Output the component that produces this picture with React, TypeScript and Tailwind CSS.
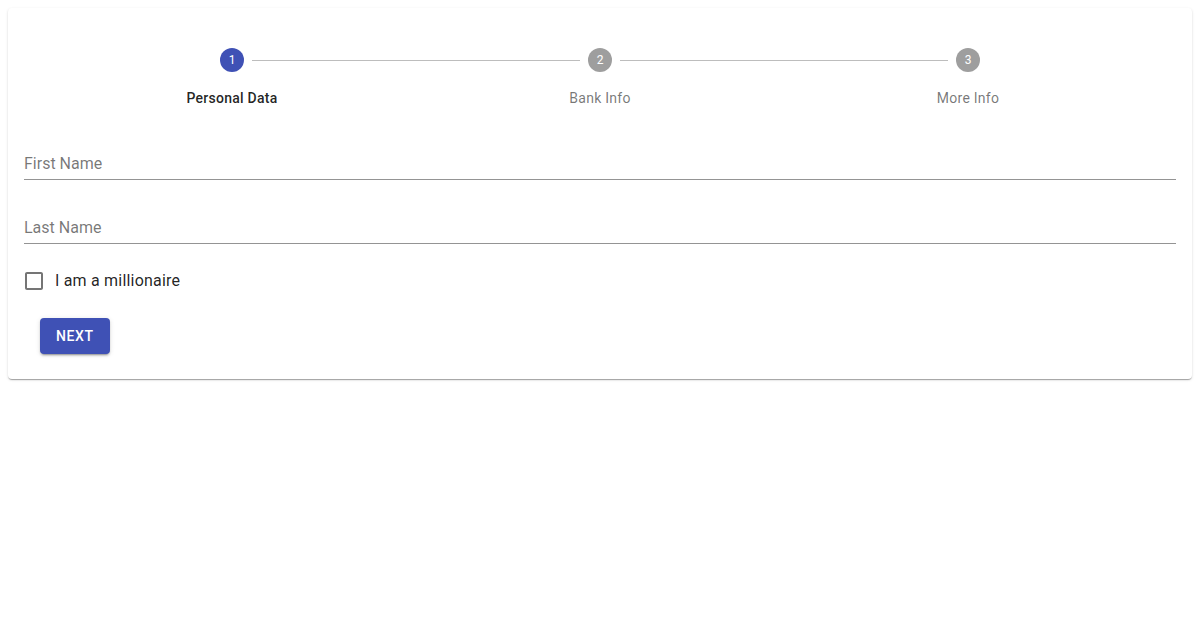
import { useState } from 'react'

const steps = ['Personal Data', 'Bank Info', 'More Info']

function Step({ index, label, active }: { index: number; label: string; active: boolean }) {
  const first = index === 0
  const last = index === steps.length - 1
  return (
    <div className="flex flex-1 flex-col items-center">
      <div className="flex w-full items-center">
        <div className={`h-px flex-1 ${first ? '' : 'bg-[#bdbdbd]'}`} />
        <div className="mx-2 flex h-6 w-6 items-center justify-center rounded-full">
          <div
            className={`flex h-6 w-6 items-center justify-center rounded-full text-xs text-white ${
              active ? 'bg-[#3f51b5]' : 'bg-[#9e9e9e]'
            }`}
          >
            {index + 1}
          </div>
        </div>
        <div className={`h-px flex-1 ${last ? '' : 'bg-[#bdbdbd]'}`} />
      </div>
      <div
        className={`mt-4 text-sm leading-5 tracking-[0.25px] ${
          active ? 'font-medium text-black/[0.87]' : 'text-black/[0.54]'
        }`}
      >
        {label}
      </div>
    </div>
  )
}

function TextField({ label }: { label: string }) {
  return (
    <div className="flex h-12 flex-col pt-4">
      <input
        placeholder={label}
        className="h-8 w-full border-b border-black/[0.42] bg-transparent pt-[6px] pb-[7px] text-base leading-[19px] text-black/[0.87] outline-none placeholder:text-black/[0.54]"
      />
    </div>
  )
}

export default function App() {
  const [checked, setChecked] = useState(false)

  return (
    <div className="min-h-[630px] bg-white p-2 font-['Roboto','Helvetica','Arial',sans-serif]">
      <div className="rounded bg-white px-4 pt-4 pb-[25px] shadow-[0px_2px_1px_-1px_rgba(0,0,0,0.2),0px_1px_1px_0px_rgba(0,0,0,0.14),0px_1px_3px_0px_rgba(0,0,0,0.12)]">
        {/* Stepper */}
        <div className="flex p-6">
          {steps.map((s, i) => (
            <Step key={s} index={i} label={s} active={i === 0} />
          ))}
        </div>

        {/* Fields */}
        <div className="flex flex-col gap-4">
          <TextField label="First Name" />
          <TextField label="Last Name" />
        </div>

        {/* Checkbox */}
        <label className="-ml-[11px] mt-4 flex cursor-pointer items-center">
          <span className="p-[9px] text-black/[0.54]" onClick={() => setChecked(!checked)}>
            <svg viewBox="0 0 24 24" className="h-6 w-6 fill-current">
              {checked ? (
                <path d="M19 3H5c-1.11 0-2 .9-2 2v14c0 1.1.89 2 2 2h14c1.11 0 2-.9 2-2V5c0-1.1-.89-2-2-2zm-9 14l-5-5 1.41-1.41L10 14.17l7.59-7.59L19 8l-9 9z" />
              ) : (
                <path d="M19 5v14H5V5h14m0-2H5c-1.1 0-2 .9-2 2v14c0 1.1.9 2 2 2h14c1.1 0 2-.9 2-2V5c0-1.1-.9-2-2-2z" />
              )}
            </svg>
          </span>
          <span className="text-base leading-6 tracking-[0.2px] text-black/[0.87]">I am a millionaire</span>
        </label>

        {/* Actions */}
        <div className="mt-4 ml-4 flex">
          <button className="h-9 rounded bg-[#3f51b5] px-4 text-sm font-medium uppercase tracking-[0.6px] text-white shadow-[0px_3px_1px_-2px_rgba(0,0,0,0.2),0px_2px_2px_0px_rgba(0,0,0,0.14),0px_1px_5px_0px_rgba(0,0,0,0.12)]">
            Next
          </button>
        </div>
      </div>
    </div>
  )
}
